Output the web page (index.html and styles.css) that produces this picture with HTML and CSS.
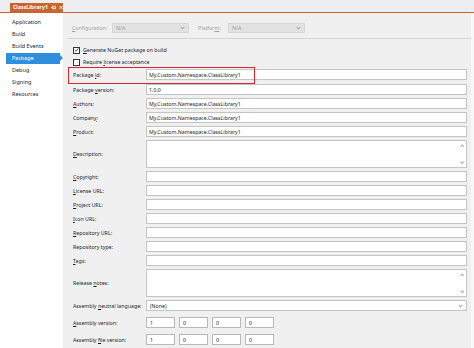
FILE: index.html
```html
<!DOCTYPE html>
<html>
<head>
<meta charset="utf-8">
<link rel="stylesheet" href="styles.css">
</head>
<body>
<div class="app">
  <div class="tabstrip">
    <div class="tab">
      <span class="tab-title">ClassLibrary1</span>
      <svg class="pin" width="6" height="5" viewBox="0 0 6 5"><path d="M0 2.5H2M2 0.5V4.5M2 1H5.5V4H2M2 3.2H5.5" stroke="#fff" stroke-width="0.8" fill="none"/></svg>
      <svg class="close" width="5" height="5" viewBox="0 0 5 5"><path d="M0.5 0.5L4.5 4.5M4.5 0.5L0.5 4.5" stroke="#fff" stroke-width="1"/></svg>
    </div>
  </div>
  <div class="body">
    <nav class="side">
      <div class="item">Application</div>
      <div class="item">Build</div>
      <div class="item">Build Events</div>
      <div class="item sel">Package</div>
      <div class="item">Debug</div>
      <div class="item">Signing</div>
      <div class="item">Resources</div>
    </nav>
    <main class="main">
      <div class="config">
        <span class="dis-label"><u>C</u>onfiguration:</span>
        <div class="dd dd-conf"><span>N/A</span><i class="chev"></i></div>
        <span class="dis-label plat">Platfor<u>m</u>:</span>
        <div class="dd dd-plat"><span>N/A</span><i class="chev"></i></div>
      </div>
      <div class="sep"></div>
      <div class="checks">
        <label class="check"><span class="box checked"><svg width="6" height="6" viewBox="0 0 6 6"><path d="M0.8 3L2.4 4.6L5.2 1.2" stroke="#222" stroke-width="0.9" fill="none"/></svg></span><span><u>G</u>enerate NuGet package on build</span></label>
        <label class="check"><span class="box"></span><span>Require <u>l</u>icense acceptance</span></label>
      </div>
      <div class="form">
        <div class="row r-first highlight"><span class="lbl">Package <u>i</u>d:</span><div class="inp">My.Custom.Namespace.ClassLibrary1</div></div>
        <div class="row r-ver"><span class="lbl">Package <u>v</u>ersion:</span><div class="inp">1.0.0</div></div>
        <div class="row"><span class="lbl"><u>A</u>uthors:</span><div class="inp">My.Custom.Namespace.ClassLibrary1</div></div>
        <div class="row"><span class="lbl">Compan<u>y</u>:</span><div class="inp">My.Custom.Namespace.ClassLibrary1</div></div>
        <div class="row"><span class="lbl"><u>P</u>roduct:</span><div class="inp">My.Custom.Namespace.ClassLibrary1</div></div>
        <div class="row tall"><span class="lbl"><u>D</u>escription:</span><div class="inp area"><span class="scroll"><i class="up"></i><i class="down"></i></span></div></div>
        <div class="row"><span class="lbl"><u>C</u>opyright:</span><div class="inp"></div></div>
        <div class="row"><span class="lbl"><u>L</u>icense URL:</span><div class="inp"></div></div>
        <div class="row"><span class="lbl"><u>P</u>roject URL:</span><div class="inp"></div></div>
        <div class="row"><span class="lbl"><u>I</u>con URL:</span><div class="inp"></div></div>
        <div class="row"><span class="lbl"><u>R</u>epository URL:</span><div class="inp"></div></div>
        <div class="row"><span class="lbl">Repository t<u>y</u>pe:</span><div class="inp"></div></div>
        <div class="row"><span class="lbl"><u>T</u>ags:</span><div class="inp"></div></div>
        <div class="row tall"><span class="lbl">Release <u>n</u>otes:</span><div class="inp area"><span class="scroll"><i class="up"></i><i class="down"></i></span></div></div>
        <div class="row"><span class="lbl">Assembly <u>n</u>eutral language:</span><div class="inp sel-inp">(None)<i class="chev"></i></div></div>
        <div class="row r-asm"><span class="lbl"><u>A</u>ssembly version:</span><div class="vers"><div class="inp v">1</div><div class="inp v">0</div><div class="inp v">0</div><div class="inp v">0</div></div></div>
        <div class="row r-file"><span class="lbl">Assembly <u>f</u>ile version:</span><div class="vers"><div class="inp v">1</div><div class="inp v">0</div><div class="inp v">0</div><div class="inp v">0</div></div></div>
      </div>
    </main>
  </div>
</div>
</body>
</html>
```

FILE: styles.css
```css
* { box-sizing: border-box; }
html, body { margin: 0; padding: 0; }
body {
  width: 474px;
  height: 348px;
  overflow: hidden;
  background: #ffffff;
  font-family: "Noto Sans", "Open Sans", sans-serif;
  font-size: 5.25px;
  color: #1e1e1e;
}
u { text-decoration: underline; text-underline-offset: 0.5px; }
.app { display: flex; flex-direction: column; height: 348px; }
.tabstrip {
  height: 13px;
  background: #eeeef2;
  border-bottom: 1px solid #c86432;
  display: flex;
  align-items: flex-end;
  padding-left: 10px;
}
.tab {
  height: 9px;
  width: 53px;
  background: #c9652f;
  color: #fff;
  display: flex;
  align-items: center;
  padding-left: 3px;
  gap: 3px;
  font-weight: 700;
}
.tab-title { line-height: 9px; }
.pin, .close { display: block; }
.body { flex: 1; display: flex; min-height: 0; }
.side {
  width: 63px;
  background: #ffffff;
  padding-top: 3px;
  font-size: 5.5px;
}
.item {
  height: 12px;
  line-height: 12px;
  margin-left: 6px;
  padding-left: 6px;
  width: 54px;
  color: #1e1e1e;
  position: relative;
  white-space: nowrap;
}
.item.sel {
  background: #2f8fdc;
  color: #fff;
  height: 11px;
  line-height: 11px;
  margin-top: 0.5px;
  margin-bottom: 0.5px;
}
.item.sel::after {
  content: "";
  position: absolute;
  right: -3px;
  top: 2.5px;
  border-left: 3px solid #2f8fdc;
  border-top: 3px solid transparent;
  border-bottom: 3px solid transparent;
}
.main {
  flex: 1;
  background: #f0f0f0;
  border-right: 3px solid #f8f8f8;
  padding-left: 5px;
}
.config {
  display: flex;
  align-items: center;
  height: 10px;
  margin-top: 10px;
  padding-left: 4px;
}
.dis-label { color: #a2a2a2; width: 40px; white-space: nowrap; }
.dis-label.plat { width: 30px; margin-left: 9px; }
.dd {
  height: 10px;
  background: #e2e2e2;
  border: 1px solid #d6d6d6;
  color: #9a9a9a;
  display: flex;
  align-items: center;
  padding-left: 3px;
  position: relative;
}
.dd-conf { width: 77px; }
.dd-plat { width: 77px; }
.chev {
  position: absolute;
  right: 4px;
  top: 50%;
  width: 3px;
  height: 3px;
  border-right: 0.7px solid #aaa;
  border-bottom: 0.7px solid #aaa;
  transform: translateY(-70%) rotate(45deg);
}
.sep {
  height: 1px;
  background: #d4d4d4;
  margin-top: 5px;
}
.checks { margin-top: 5px; padding-left: 5px; display: flex; flex-direction: column; }
.check { display: flex; align-items: center; height: 12px; gap: 3px; white-space: nowrap; }
.box {
  width: 7px;
  height: 7px;
  border: 0.8px solid #333;
  background: #fff;
  display: flex;
  align-items: center;
  justify-content: center;
}
.box svg { display: block; }
.form {
  display: flex;
  flex-direction: column;
  gap: 3px;
  margin-top: 1px;
  padding-left: 5px;
}
.row {
  display: flex;
  align-items: center;
  height: 11px;
  position: relative;
}
.row.tall { height: 28px; }
.r-ver { margin-top: 1px; }
.r-asm { margin-top: 3px; }
.r-file { margin-top: 3px; }
.lbl { width: 73px; flex: none; white-space: nowrap; }
.inp {
  width: 321px;
  height: 100%;
  background: #fff;
  border: 1px solid #c4c4c4;
  padding-left: 2px;
  display: flex;
  align-items: center;
  position: relative;
  white-space: nowrap;
}
.highlight::after {
  content: "";
  position: absolute;
  left: -5px;
  top: -2px;
  width: 185px;
  height: 15px;
  border: 1.5px solid #d8262e;
}
.area { align-items: flex-start; }
.scroll {
  position: absolute;
  right: 0;
  top: 0;
  bottom: 0;
  width: 8px;
}
.scroll i {
  position: absolute;
  left: 2.5px;
  width: 2.5px;
  height: 2.5px;
  border-left: 0.7px solid #b0b0b0;
  border-top: 0.7px solid #b0b0b0;
}
.scroll .up { top: 4px; transform: rotate(45deg); }
.scroll .down { bottom: 4px; transform: rotate(225deg); }
.sel-inp { padding-left: 3px; }
.vers { display: flex; gap: 4px; height: 100%; }
.inp.v { width: 29px; padding-left: 3px; border-color: #b8b8b8; }
```
